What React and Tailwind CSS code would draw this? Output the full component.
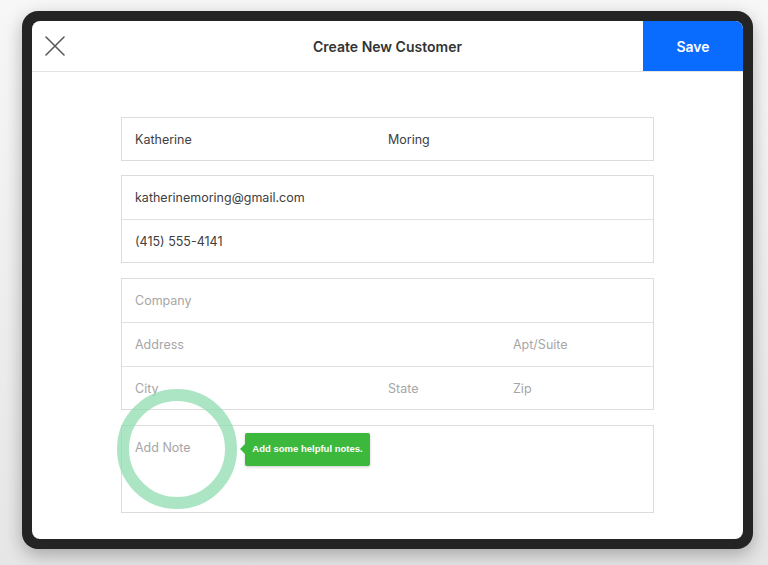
import React from "react";

const font = { fontFamily: "Inter, 'Open Sans', Arial, sans-serif" };

function Row({ children, last }) {
  return (
    <div className={`flex items-center pt-[2px] text-[12.5px] ${last ? "h-[42px]" : "h-[44px] border-b border-[#e1e1e1]"}`}>
      {children}
    </div>
  );
}

function Cell({ children, w, muted }) {
  return (
    <div className={`${w || "flex-1"} pl-[13px] ${muted ? "text-[#a6a6a6]" : "text-[#404040]"}`}>{children}</div>
  );
}

export default function App() {
  return (
    <div
      className="w-[768px] h-[565px] overflow-hidden bg-gradient-to-b from-[#f7f7f7] to-[#e6e6e6] pl-[22px] pt-[11px]"
      style={font}
    >
      <div className="w-[731px] h-[538px] rounded-[16px] bg-[#242424] p-[10px] shadow-[0_6px_18px_rgba(0,0,0,0.28)]">
        <div className="h-full w-full overflow-hidden rounded-[8px] bg-white">
          {/* header */}
          <div className="flex h-[51px] border-b border-[#e3e3e3]">
            <div className="w-[100px] flex items-center pl-[13px]">
              <svg width="20" height="20" viewBox="0 0 20 20" fill="none" stroke="#5a5a5a" strokeWidth="1.6" strokeLinecap="round">
                <path d="M1 1 L19 19 M19 1 L1 19" />
              </svg>
            </div>
            <div className="flex-1 flex items-center justify-center text-[14px] font-semibold text-[#333]">
              Create New Customer
            </div>
            <div className="w-[100px] flex items-center justify-center bg-[#0a6cff] text-[14px] font-semibold text-white">
              Save
            </div>
          </div>

          {/* form */}
          <div className="ml-[89px] mt-[45px] w-[533px] flex flex-col">
            <div className="border border-[#dcdcdc]">
              <Row last>
                <Cell w="w-[253px]">Katherine</Cell>
                <Cell>Moring</Cell>
              </Row>
            </div>

            <div className="mt-[14px] border border-[#dcdcdc]">
              <Row>
                <Cell>katherinemoring@gmail.com</Cell>
              </Row>
              <Row last>
                <Cell>(415) 555-4141</Cell>
              </Row>
            </div>

            <div className="mt-[15px] border border-[#dcdcdc]">
              <Row>
                <Cell muted>Company</Cell>
              </Row>
              <Row>
                <Cell muted w="w-[378px]">Address</Cell>
                <Cell muted>Apt/Suite</Cell>
              </Row>
              <Row last>
                <Cell muted w="w-[253px]">City</Cell>
                <Cell muted w="w-[125px]">State</Cell>
                <Cell muted>Zip</Cell>
              </Row>
            </div>

            <div className="relative mt-[15px] h-[88px] border border-[#dcdcdc]">
              <Row last>
                <Cell muted>Add Note</Cell>
              </Row>
              <div className="absolute left-[-5px] top-[-37px] h-[120px] w-[120px] rounded-full border-[12px] border-[#8fdcb0]/75" />
              <div className="absolute left-[123px] top-[7px] flex h-[33px] w-[125px] items-center justify-center rounded-[2px] bg-[#3cb93c] text-[9.5px] font-bold text-white shadow-[0_1px_3px_rgba(0,0,0,0.2)]"
                style={{ fontFamily: "'Liberation Sans', Arial, sans-serif" }}>
                <div className="absolute left-[-5px] top-[11px] h-0 w-0 border-y-[5px] border-r-[5px] border-y-transparent border-r-[#3cb93c]" />
                Add some helpful notes.
              </div>
            </div>
          </div>
        </div>
      </div>
    </div>
  );
}
